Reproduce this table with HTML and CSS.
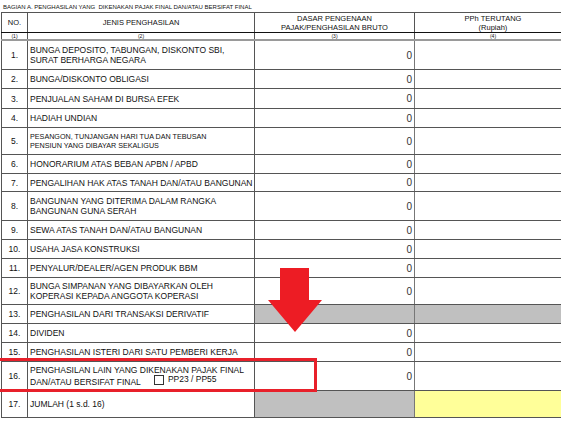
FILE: index.html
```html
<!DOCTYPE html>
<html>
<head>
<meta charset="utf-8">
<link rel="stylesheet" href="styles.css">
</head>
<body>
<div class="page">
  <div class="title">BAGIAN A. PENGHASILAN YANG&nbsp; DIKENAKAN PAJAK FINAL DAN/ATAU BERSIFAT FINAL</div>
  <table class="form">
    <colgroup>
      <col class="c1"><col class="c2"><col class="c3"><col class="c4">
    </colgroup>
    <thead>
      <tr class="head">
        <th>NO.</th>
        <th>JENIS PENGHASILAN</th>
        <th>DASAR PENGENAAN<br>PAJAK/PENGHASILAN BRUTO</th>
        <th>PPh TERUTANG<br>(Rupiah)</th>
      </tr>
      <tr class="sub">
        <th>(1)</th><th>(2)</th><th>(3)</th><th>(4)</th>
      </tr>
    </thead>
    <tbody>
      <tr class="h29"><td class="no">1.</td><td class="name">BUNGA DEPOSITO, TABUNGAN, DISKONTO SBI,<br>SURAT BERHARGA NEGARA</td><td class="val">0</td><td></td></tr>
      <tr class="h19"><td class="no">2.</td><td class="name">BUNGA/DISKONTO OBLIGASI</td><td class="val">0</td><td></td></tr>
      <tr class="h20"><td class="no">3.</td><td class="name">PENJUALAN SAHAM DI BURSA EFEK</td><td class="val">0</td><td></td></tr>
      <tr class="h19"><td class="no">4.</td><td class="name">HADIAH UNDIAN</td><td class="val">0</td><td></td></tr>
      <tr class="h27"><td class="no">5.</td><td class="name small">PESANGON, TUNJANGAN HARI TUA DAN TEBUSAN<br>PENSIUN YANG DIBAYAR SEKALIGUS</td><td class="val">0</td><td></td></tr>
      <tr class="h19"><td class="no">6.</td><td class="name">HONORARIUM ATAS BEBAN APBN / APBD</td><td class="val">0</td><td></td></tr>
      <tr class="h18"><td class="no">7.</td><td class="name">PENGALIHAN HAK ATAS TANAH DAN/ATAU BANGUNAN</td><td class="val">0</td><td></td></tr>
      <tr class="h29"><td class="no">8.</td><td class="name">BANGUNAN YANG DITERIMA DALAM RANGKA<br>BANGUNAN GUNA SERAH</td><td class="val">0</td><td></td></tr>
      <tr class="h19"><td class="no">9.</td><td class="name">SEWA ATAS TANAH DAN/ATAU BANGUNAN</td><td class="val">0</td><td></td></tr>
      <tr class="h19"><td class="no">10.</td><td class="name">USAHA JASA KONSTRUKSI</td><td class="val">0</td><td></td></tr>
      <tr class="h19"><td class="no">11.</td><td class="name">PENYALUR/DEALER/AGEN PRODUK BBM</td><td class="val">0</td><td></td></tr>
      <tr class="h27"><td class="no">12.</td><td class="name">BUNGA SIMPANAN YANG DIBAYARKAN OLEH<br>KOPERASI KEPADA ANGGOTA KOPERASI</td><td class="val">0</td><td></td></tr>
      <tr class="h19"><td class="no">13.</td><td class="name">PENGHASILAN DARI TRANSAKSI DERIVATIF</td><td class="grey"></td><td class="grey"></td></tr>
      <tr class="h19"><td class="no">14.</td><td class="name">DIVIDEN</td><td class="val">0</td><td></td></tr>
      <tr class="h19"><td class="no">15.</td><td class="name">PENGHASILAN ISTERI DARI SATU PEMBERI KERJA</td><td class="val">0</td><td></td></tr>
      <tr class="h29"><td class="no">16.</td><td class="name">PENGHASILAN LAIN YANG DIKENAKAN PAJAK FINAL<br>DAN/ATAU BERSIFAT FINAL <span class="check"></span><span class="pp">PP23 / PP55</span></td><td class="val">0</td><td></td></tr>
      <tr class="h27"><td class="no">17.</td><td class="name">JUMLAH (1 s.d. 16)</td><td class="grey"></td><td class="yellow"></td></tr>
    </tbody>
  </table>

  <div class="highlight"></div>
  <svg class="arrow" width="56" height="66" viewBox="0 0 56 66">
    <polygon points="13,0 42,0 42,32 55,32 28,64 1,32 13,32" fill="#ed1c24"/>
  </svg>
</div>
</body>
</html>
```

FILE: styles.css
```css
html, body {
  margin: 0;
  padding: 0;
  background: #ffffff;
}

.page {
  position: relative;
  width: 561px;
  height: 421px;
  overflow: hidden;
  font-family: "Liberation Sans", Arial, sans-serif;
  color: #111111;
}

.title {
  font-size: 6px;
  line-height: 8px;
  padding: 3px 0 0 3px;
  height: 9px;
  white-space: nowrap;
}

.form {
  border-collapse: collapse;
  table-layout: fixed;
  margin-left: 1px;
  width: 570px;
}

.c1 { width: 26px; }
.c2 { width: 227px; }
.c3 { width: 160px; }
.c4 { width: 157px; }

.form th,
.form td {
  border: 1px solid #555555;
  padding: 0;
  white-space: nowrap;
  vertical-align: middle;
}

.form td:nth-child(3) {
  border-right-color: #777777;
}

.head th {
  font-weight: normal;
  font-size: 7.5px;
  line-height: 9px;
  height: 19px;
  text-align: center;
  border-bottom: 1px solid #111111;
}

.sub th {
  font-weight: normal;
  font-size: 5px;
  line-height: 6px;
  height: 6px;
  text-align: center;
  border-bottom: 2px solid #9a9a9a;
}

.no {
  font-size: 8.5px;
  text-align: center;
}

.name {
  font-size: 8.5px;
  line-height: 10px;
  padding-left: 2px !important;
}

.name.small {
  font-size: 7.2px;
  line-height: 9px;
}

.val {
  text-align: right;
  font-size: 10px;
  color: #333333;
  padding-right: 2px !important;
}

.grey { background: #c0c0c0; }
.yellow { background: #ffff99; }

.h18 td { height: 17px; }
.h19 td { height: 18px; }
.h20 td { height: 19px; }
.h27 td { height: 26px; }
.h29 td { height: 28px; }

.check {
  display: inline-block;
  width: 8px;
  height: 8px;
  border: 1px solid #333333;
  margin-left: 11px;
  vertical-align: 0px;
}

.pp {
  display: inline-block;
  margin-left: 4px;
  position: relative;
  top: -3px;
}

.highlight {
  position: absolute;
  left: -5px;
  top: 358px;
  width: 316px;
  height: 28px;
  border: 3px solid #e8202a;
}

.arrow {
  position: absolute;
  left: 267px;
  top: 268px;
}
```
